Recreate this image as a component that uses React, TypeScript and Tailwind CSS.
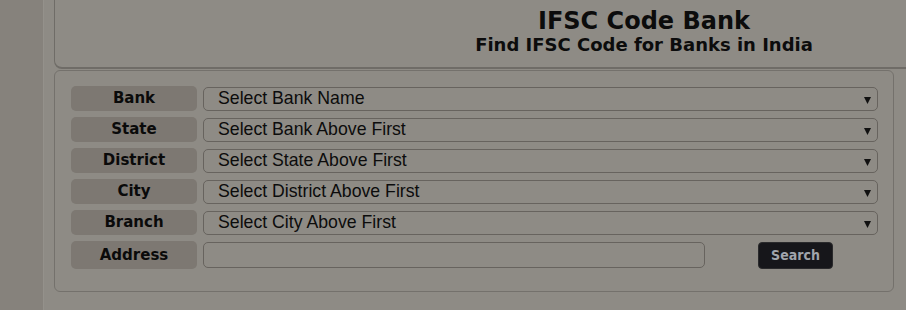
const rows = [
  { label: "Bank", text: "Select Bank Name" },
  { label: "State", text: "Select Bank Above First" },
  { label: "District", text: "Select State Above First" },
  { label: "City", text: "Select District Above First" },
  { label: "Branch", text: "Select City Above First" },
];

function Label({ children, tall }: { children: string; tall?: boolean }) {
  return (
    <div
      className={`flex w-[126px] shrink-0 items-center justify-center rounded-[5px] bg-[#7d7872] font-['DejaVu_Sans','Verdana',sans-serif] text-[15px] font-bold text-[#0a0a0a] ${tall ? "h-[28px]" : "h-[25px]"}`}
    >
      {children}
    </div>
  );
}

export default function App() {
  return (
    <div className="flex h-[310px] w-[906px] overflow-hidden bg-[#8e8b85]">
      <div className="w-[44px] shrink-0 border-r border-[#94918b] bg-[#86827c]" />
      <div className="flex flex-1 flex-col pl-[10px]">
        <div className="-mr-[40px] flex h-[69px] rounded-bl-[8px] border-b-2 border-l border-[#6f6c67]">
          <div className="ml-[324px] flex w-[530px] flex-col items-center pt-[7px] font-['DejaVu_Sans','Verdana',sans-serif] font-bold text-[#0c0c0c]">
            <div className="text-[24px] leading-[28px]">IFSC Code Bank</div>
            <div className="text-[18px] leading-[20px]">Find IFSC Code for Banks in India</div>
          </div>
        </div>
        <div className="mt-[1px] flex h-[222px] w-[840px] flex-col gap-[6px] rounded-[6px] border border-[#74716c] pl-[16px] pt-[15px]">
          {rows.map((r) => (
            <div key={r.label} className="flex items-center gap-[6px]">
              <Label>{r.label}</Label>
              <div className="flex h-[24px] w-[675px] items-center justify-between rounded-[5px] border border-[#67635e] pl-[14px] pr-[6px] font-['Liberation_Sans','Arial',sans-serif] text-[17.7px] leading-none text-[#0c0c0c]">
                <span>{r.text}</span>
                <svg width="7" height="7" viewBox="0 0 7 7" className="mt-[3px]">
                  <path d="M0 0H7L3.5 7Z" fill="#111" />
                </svg>
              </div>
            </div>
          ))}
          <div className="flex items-center gap-[6px]">
            <Label tall>Address</Label>
            <div className="h-[26px] w-[502px] rounded-[5px] border border-[#67635e]" />
            <button className="ml-[47px] flex h-[27px] w-[75px] items-center justify-center rounded-[4px] border border-[#2a2a2c] bg-[#16161a] font-['DejaVu_Sans_Condensed','DejaVu_Sans',sans-serif] text-[14px] font-bold text-[#a0a4ab]">
              Search
            </button>
          </div>
        </div>
      </div>
    </div>
  );
}
